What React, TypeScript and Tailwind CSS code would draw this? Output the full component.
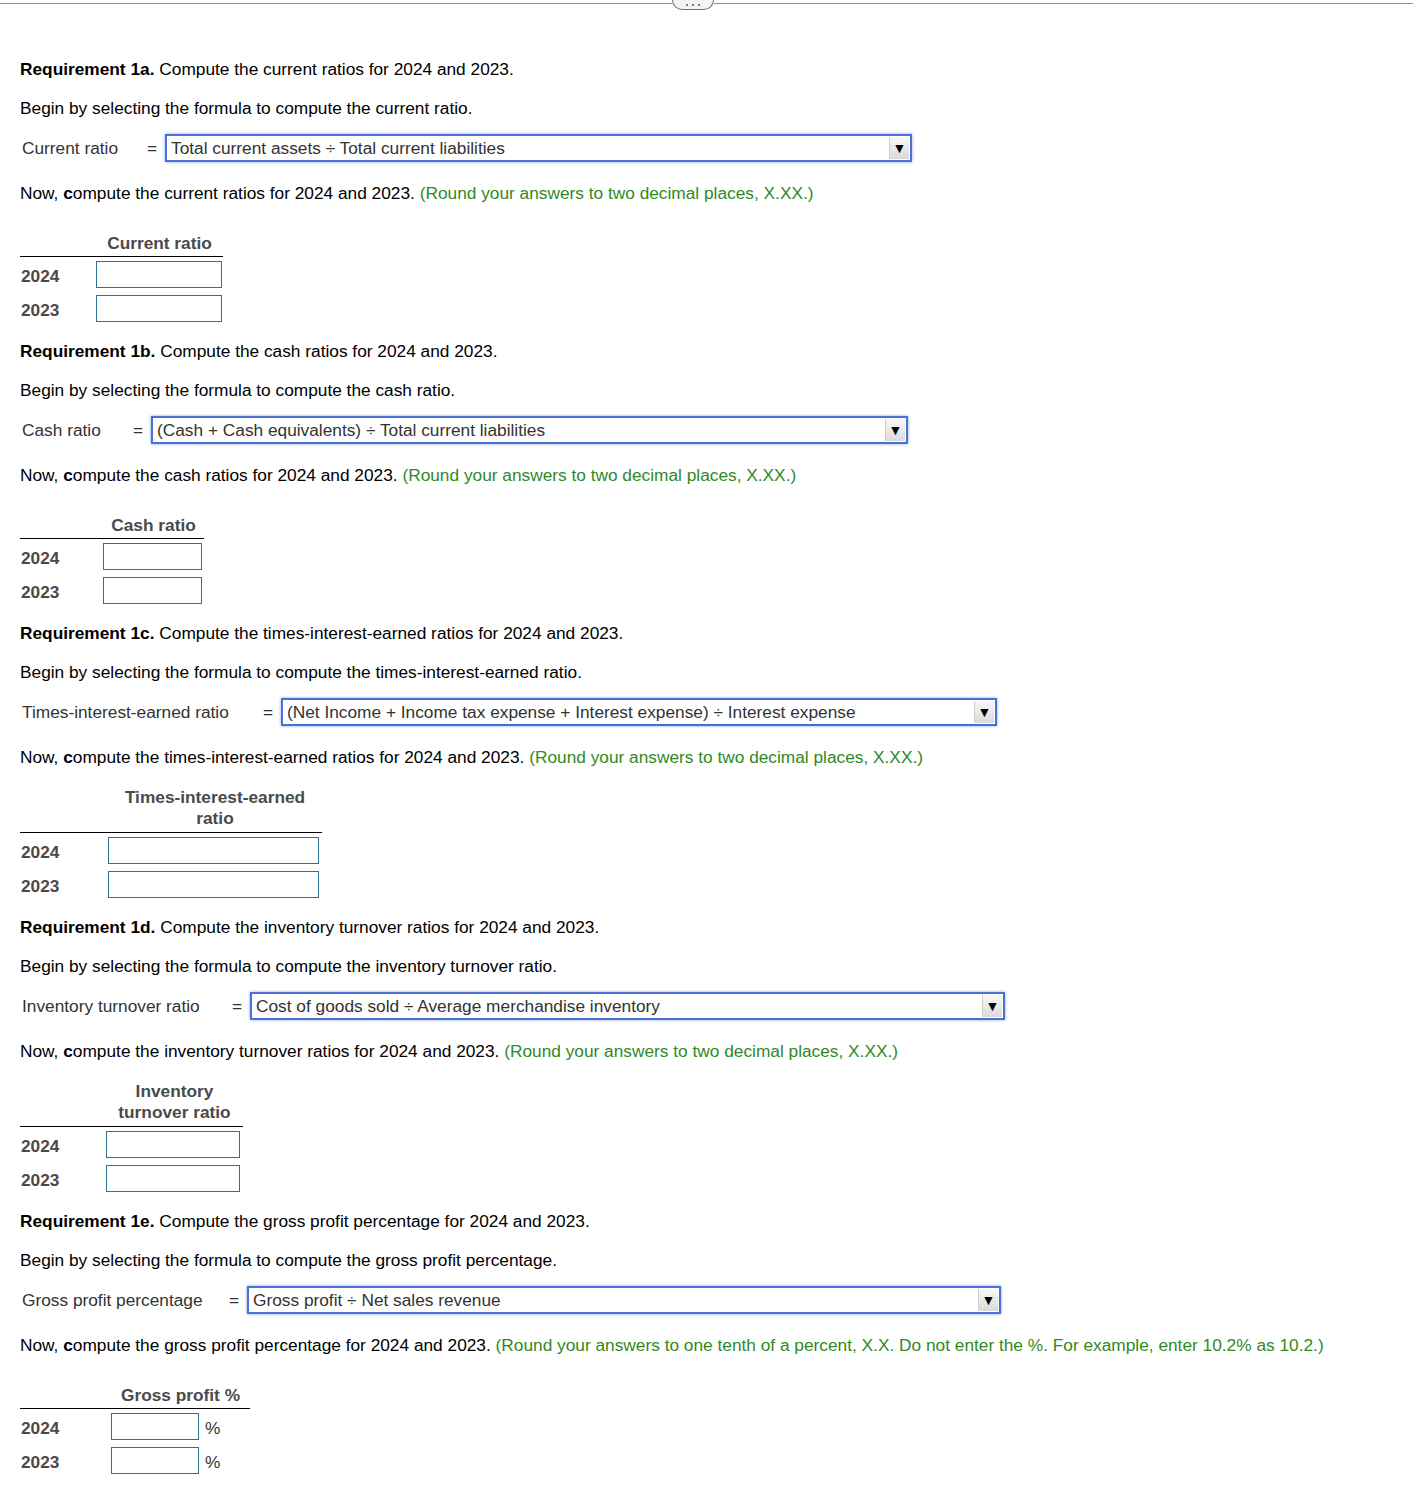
import React from "react";

type Section = {
  id: string;
  title: string;
  begin: string;
  label: string;
  labelW: number;
  formula: string;
  selectW: number;
  now: string;
  note: string;
  header: string[];
  tableW: number;
  yearW: number;
  inputW: number;
  pct?: boolean;
};

const sections: Section[] = [
  {
    id: "1a",
    title: "Compute the current ratios for 2024 and 2023.",
    begin: "Begin by selecting the formula to compute the current ratio.",
    label: "Current ratio",
    labelW: 127,
    formula: "Total current assets \u00f7 Total current liabilities",
    selectW: 747,
    now: "ompute the current ratios for 2024 and 2023.",
    note: "(Round your answers to two decimal places, X.XX.)",
    header: ["Current ratio"],
    tableW: 203,
    yearW: 76,
    inputW: 126,
  },
  {
    id: "1b",
    title: "Compute the cash ratios for 2024 and 2023.",
    begin: "Begin by selecting the formula to compute the cash ratio.",
    label: "Cash ratio",
    labelW: 113,
    formula: "(Cash + Cash equivalents) \u00f7 Total current liabilities",
    selectW: 757,
    now: "ompute the cash ratios for 2024 and 2023.",
    note: "(Round your answers to two decimal places, X.XX.)",
    header: ["Cash ratio"],
    tableW: 184,
    yearW: 83,
    inputW: 99,
  },
  {
    id: "1c",
    title: "Compute the times-interest-earned ratios for 2024 and 2023.",
    begin: "Begin by selecting the formula to compute the times-interest-earned ratio.",
    label: "Times-interest-earned ratio",
    labelW: 243,
    formula: "(Net Income + Income tax expense + Interest expense) \u00f7 Interest expense",
    selectW: 716,
    now: "ompute the times-interest-earned ratios for 2024 and 2023.",
    note: "(Round your answers to two decimal places, X.XX.)",
    header: ["Times-interest-earned", "ratio"],
    tableW: 302,
    yearW: 88,
    inputW: 211,
  },
  {
    id: "1d",
    title: "Compute the inventory turnover ratios for 2024 and 2023.",
    begin: "Begin by selecting the formula to compute the inventory turnover ratio.",
    label: "Inventory turnover ratio",
    labelW: 212,
    formula: "Cost of goods sold \u00f7 Average merchandise inventory",
    selectW: 755,
    now: "ompute the inventory turnover ratios for 2024 and 2023.",
    note: "(Round your answers to two decimal places, X.XX.)",
    header: ["Inventory", "turnover ratio"],
    tableW: 223,
    yearW: 86,
    inputW: 134,
  },
  {
    id: "1e",
    title: "Compute the gross profit percentage for 2024 and 2023.",
    begin: "Begin by selecting the formula to compute the gross profit percentage.",
    label: "Gross profit percentage",
    labelW: 209,
    formula: "Gross profit \u00f7 Net sales revenue",
    selectW: 754,
    now: "ompute the gross profit percentage for 2024 and 2023.",
    note: "(Round your answers to one tenth of a percent, X.X. Do not enter the %. For example, enter 10.2% as 10.2.)",
    header: ["Gross profit %"],
    tableW: 230,
    yearW: 91,
    inputW: 88,
    pct: true,
  },
];

function FormulaSelect({ text, width }: { text: string; width: number }) {
  return (
    <div
      className="flex h-[28px] items-stretch border-2 border-[#4a70d8] bg-white shadow-[0_0_3px_#8fa8ea]"
      style={{ width }}
    >
      <div className="flex-1 pl-[4px] leading-[24px] text-[#333]">{text}</div>
      <div className="my-[1px] mr-[1px] flex w-[20px] items-center justify-center border-l border-[#cfcfcf] bg-gradient-to-b from-[#f8f8f8] to-[#dadada] text-[14px] leading-none text-black">
        ▼
      </div>
    </div>
  );
}

function RatioTable({ s }: { s: Section }) {
  const twoLine = s.header.length > 1;
  return (
    <div className={twoLine ? "mt-[20px]" : "mt-[30px]"} style={{ width: s.tableW }}>
      <div className="flex border-b border-black pb-[3px]">
        <div style={{ width: s.yearW }} />
        <div
          className={`flex-1 text-center font-bold text-[#4a4a4a] ${twoLine ? "leading-[21px]" : "leading-[20px]"}`}
        >
          {s.header.map((h) => (
            <div key={h}>{h}</div>
          ))}
        </div>
      </div>
      {["2024", "2023"].map((y) => (
        <div key={y} className="flex h-[34px] items-center">
          <div className="pl-[1px] pt-[3px] font-bold text-[#4a4a4a]" style={{ width: s.yearW }}>
            {y}
          </div>
          <div className="h-[27px] border border-[#2f7393] bg-white" style={{ width: s.inputW }} />
          {s.pct && <span className="ml-[6px] pt-[3px] text-[#333]">%</span>}
        </div>
      ))}
    </div>
  );
}

export default function App() {
  return (
    <div className="min-h-[1494px] w-[1418px] bg-white pb-[20px] font-['Liberation_Sans',Arial,sans-serif] text-[17.3px] leading-[20px] text-black">
      <div className="flex items-start pr-[5px]">
        <div className="mt-[3px] h-px w-[672px] bg-[#8a8f96]" />
        <div className="flex h-[10px] w-[42px] items-center justify-center gap-[4px] rounded-b-full rounded-t-[3px] border border-t-0 border-[#6f757d] bg-[#f3f4f6]">
          <span className="h-[2px] w-[2px] rounded-full bg-[#555]" />
          <span className="h-[2px] w-[2px] rounded-full bg-[#555]" />
          <span className="h-[2px] w-[2px] rounded-full bg-[#555]" />
        </div>
        <div className="mt-[3px] h-px flex-1 bg-[#8a8f96]" />
      </div>

      <div className="pl-[20px] pt-[49px]">
        {sections.map((s, i) => (
          <div key={s.id} className={i === 0 ? "" : "mt-[16px]"}>
            <p>
              <b>Requirement {s.id}.</b> {s.title}
            </p>
            <p className="mt-[19px]">{s.begin}</p>
            <div className="mt-[16px] flex items-center">
              <div className="pl-[2px] text-[#333]" style={{ width: s.labelW }}>
                {s.label}
              </div>
              <div className="w-[18px] text-[#333]">=</div>
              <FormulaSelect text={s.formula} width={s.selectW} />
            </div>
            <p className="mt-[21px]">
              Now, <b>c</b>
              {s.now} <span className="text-[#2f8a1f]">{s.note}</span>
            </p>
            <RatioTable s={s} />
          </div>
        ))}
      </div>
    </div>
  );
}
